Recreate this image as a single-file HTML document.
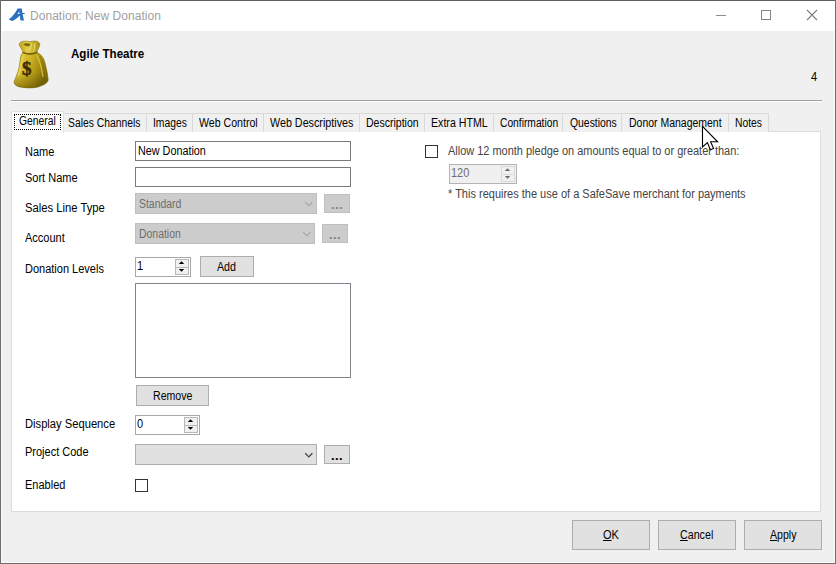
<!DOCTYPE html>
<html>
<head>
<meta charset="utf-8">
<title>Donation: New Donation</title>
<style>
*{box-sizing:border-box;margin:0;padding:0}
html,body{width:836px;height:564px;overflow:hidden;background:#f0f0f0}
body{font-family:"Liberation Sans",sans-serif;font-size:11px;color:#000;position:relative}
.abs{position:absolute}
#win{position:absolute;left:0;top:0;width:836px;height:564px;background:#f0f0f0}
.bd{position:absolute}
#titlebar{position:absolute;left:1px;top:1px;width:834px;height:30px;background:#fff}
#title{position:absolute;left:29px;top:8px;font-size:12px;line-height:15px;color:#a0a0a0;white-space:nowrap;letter-spacing:0.04px}
.t{position:absolute;white-space:nowrap;line-height:13px;font-size:12px;transform:scaleX(.9167);transform-origin:0 0}
.lbl{left:25px}
.inp{position:absolute;background:#fff;border:1px solid #7a7a7a;height:20px}
.inp .t{left:2px;top:3px}
.combo{position:absolute;background:#ccc;border:1px solid #bfbfbf;height:21px}
.combo .t{left:3px;top:4px;color:#6d6d6d;transform:scaleX(.87)}
.btn{position:absolute;background:#e1e1e1;border:1px solid #adadad}
.dis{background:#ccc;border-color:#bfbfbf;color:#838383}
.tab{position:absolute;top:113px;height:19px;border-top:1px solid #d9d9d9;border-right:1px solid #d9d9d9;background:#f0f0f0}
.tt{top:117px;transform:scaleX(.861)}
.num{position:absolute;background:#fff;border:1px solid #a8a8a8;height:20px}
.num .t{left:1px;top:2px}
.sb{position:absolute;width:14px;height:9px;background:#f0f0f0;border:1px solid #b8b8b8}
.dots{position:absolute;white-space:nowrap;font-weight:bold;font-size:13px;letter-spacing:0.45px;line-height:13px;color:#000}
.dis .dots{color:#838383}
.chk{position:absolute;width:13px;height:13px;border:1px solid #333;background:#fff}
u{text-decoration:underline}
</style>
</head>
<body>
<div id="win"></div>
<div class="bd" style="left:1px;top:31px;width:1px;height:532px;background:#fcfcfc"></div>
<div class="bd" style="left:834px;top:31px;width:1px;height:532px;background:#fcfcfc"></div>
<div class="bd" style="left:1px;top:562px;width:834px;height:1px;background:#fafafa"></div>
<div class="bd" style="left:0;top:0;width:836px;height:1px;background:#5e5e5e"></div>
<div class="bd" style="left:0;top:0;width:1px;height:564px;background:#6c6c6c"></div>
<div class="bd" style="left:835px;top:0;width:1px;height:564px;background:#6e6e6e"></div>
<div class="bd" style="left:0;top:563px;width:836px;height:1px;background:#6e6e6e"></div>
<div id="titlebar">
  <svg class="abs" style="left:-1px;top:-1px" width="40" height="30" viewBox="0 0 40 30">
    <path d="M17.7 8.6 L21.8 8.6 L22.4 13 L24.8 12.9 L24.6 14 L22.6 14.1 L24 20.4 L20.5 20.4 L19.7 15.6 C17.5 18 15 20 12.2 20.9 L8.7 19.6 C12 17.5 15 13.5 17.7 8.6 Z M19.2 11.6 L17.6 14 L19.6 14 Z" fill="#2b70bf" fill-rule="evenodd"/>
  </svg>
  <div id="title">Donation: New Donation</div>
  <!-- window controls -->
  <svg class="abs" style="left:710px;top:0px" width="120" height="30" viewBox="0 0 120 30">
    <path d="M5 14.5 H15" stroke="#8c8c8c" stroke-width="1" fill="none"/>
    <rect x="50.5" y="9.5" width="9" height="9" stroke="#858585" stroke-width="1" fill="none"/>
    <path d="M96 9 L106 19 M106 9 L96 19" stroke="#7d7d7d" stroke-width="1.1" fill="none"/>
  </svg>
</div>

<!-- header -->
<svg class="abs" id="bag" style="left:10px;top:36px" width="44" height="56" viewBox="0 0 44 56">
  <defs>
    <linearGradient id="gb" x1="0" y1="0" x2="1" y2="0.35">
      <stop offset="0" stop-color="#b89c14"/>
      <stop offset="0.25" stop-color="#dcc63a"/>
      <stop offset="0.5" stop-color="#cdb222"/>
      <stop offset="0.8" stop-color="#a38a10"/>
      <stop offset="1" stop-color="#7c6808"/>
    </linearGradient>
    <linearGradient id="gt" x1="0" y1="0" x2="1" y2="0">
      <stop offset="0" stop-color="#bfa418"/>
      <stop offset="0.4" stop-color="#e2cf48"/>
      <stop offset="1" stop-color="#a89012"/>
    </linearGradient>
    <linearGradient id="gs" x1="0" y1="0" x2="0" y2="1">
      <stop offset="0.55" stop-color="#6b5a06" stop-opacity="0"/>
      <stop offset="1" stop-color="#5e4e04" stop-opacity="0.55"/>
    </linearGradient>
  </defs>
  <path d="M12.8 16.5 C11 18.6 10.4 21 10.2 24 C9.6 32 7 39 4.2 45.2 C3.6 47.4 5 49.4 8 50.4 C13 52 22 52.6 28 51 C33 49.6 38.4 46.8 38.2 43.6 C37.8 39 36.6 33 35 27 C34 22.4 31.6 18.4 27 16.5 Z" fill="url(#gb)" stroke="#8a760c" stroke-width="0.6"/>
  <path d="M12.8 16.5 C11 18.6 10.4 21 10.2 24 C9.6 32 7 39 4.2 45.2 C3.6 47.4 5 49.4 8 50.4 C13 52 22 52.6 28 51 C33 49.6 38.4 46.8 38.2 43.6 C37.8 39 36.6 33 35 27 C34 22.4 31.6 18.4 27 16.5 Z" fill="url(#gs)"/>
  <path d="M26.6 19 C29.6 24 31.6 32 33 41" stroke="#e4d24e" stroke-width="1.3" fill="none" opacity="0.75"/>
  <path d="M29.6 20 C32.6 25 34.6 33 36 42" stroke="#8d790c" stroke-width="1.4" fill="none" opacity="0.7"/>
  <path d="M13 20 C11.6 27 10.4 33 8.4 40" stroke="#e8d85a" stroke-width="1.6" fill="none" opacity="0.7"/>
  <path d="M9.2 8.4 C9.6 6.2 11.6 5.2 14.6 5.2 C17.6 5 19.6 6 22 5.4 C25 4.6 28.6 5 29.8 7.8 C30 10.4 27.4 13.4 27 16.6 C23 18.4 16.8 18.4 12.8 16.6 C12.8 13.6 9.8 11.4 9.2 8.4 Z" fill="url(#gt)" stroke="#85710a" stroke-width="0.6"/>
  <path d="M13.4 8.2 C15.4 6.8 19 7 20.6 8.4 C19.4 10.8 15.4 10.8 13.4 8.2 Z" fill="#7a670a"/>
  <path d="M21.6 7.6 L19.8 15.2 M25 7.4 L23.6 15.4" stroke="#f0e274" stroke-width="1.1" fill="none" opacity="0.8"/>
  <path d="M13 16.4 C17 18.2 23 18.2 27 16.4" stroke="#6d5b06" stroke-width="1.3" fill="none"/>
  <text x="12" y="39.2" font-family="Liberation Serif, serif" font-weight="bold" font-size="19" fill="#3a2c04" stroke="#3a2c04" stroke-width="0.5">$</text>
</svg>
<div class="t" id="agile" style="left:71px;top:46px;font-weight:bold;font-size:13px;line-height:15px;transform:scaleX(.89)">Agile Theatre</div>
<div class="t" id="four" style="left:811px;top:71px">4</div>
<div class="abs" style="left:11px;top:100px;width:811px;height:1px;background:#a0a0a0"></div>
<div class="abs" style="left:11px;top:101px;width:811px;height:1px;background:#fff"></div>

<!-- tab panel -->
<div class="abs" id="panel" style="left:11px;top:131px;width:810px;height:381px;background:#fff;border:1px solid #dcdcdc"></div>

<!-- tabs -->
<div class="tab" style="left:63px;width:84px"></div>
<div class="tab" style="left:147px;width:46px"></div>
<div class="tab" style="left:193px;width:71px"></div>
<div class="tab" style="left:264px;width:96px"></div>
<div class="tab" style="left:360px;width:65px"></div>
<div class="tab" style="left:425px;width:69px"></div>
<div class="tab" style="left:494px;width:69px"></div>
<div class="tab" style="left:563px;width:59px"></div>
<div class="tab" style="left:622px;width:107px"></div>
<div class="tab" style="left:729px;width:40px"></div>
<div class="abs" id="tabsel" style="left:11px;top:111px;width:53px;height:22px;background:#fff;border:1px solid #e2e2e2;border-bottom:none"></div>
<div class="abs" style="left:14px;top:114px;width:47px;height:16px;border:1px dotted #000"></div>
<div class="t tt" id="t0" style="left:18.5px;top:115px">General</div>
<div class="t tt" id="t1" style="left:68px">Sales Channels</div>
<div class="t tt" id="t2" style="left:152.5px">Images</div>
<div class="t tt" id="t3" style="left:199px;transform:scaleX(.883)">Web Control</div>
<div class="t tt" id="t4" style="left:270px;transform:scaleX(.895)">Web Descriptives</div>
<div class="t tt" id="t5" style="left:366px;transform:scaleX(.876)">Description</div>
<div class="t tt" id="t6" style="left:431px;transform:scaleX(.885)">Extra HTML</div>
<div class="t tt" id="t7" style="left:499.5px;transform:scaleX(.855)">Confirmation</div>
<div class="t tt" id="t8" style="left:569.5px;transform:scaleX(.866)">Questions</div>
<div class="t tt" id="t9" style="left:628.5px;transform:scaleX(.873)">Donor Management</div>
<div class="t tt" id="t10" style="left:735px">Notes</div>

<!-- left column -->
<div class="t lbl" id="l1" style="top:146px">Name</div>
<div class="inp" style="left:135px;top:141px;width:216px"><div class="t" id="i1" style="transform:scaleX(.9)">New Donation</div></div>
<div class="t lbl" id="l2" style="top:172px">Sort Name</div>
<div class="inp" style="left:135px;top:167px;width:216px"></div>

<div class="t lbl" id="l3" style="top:202px;transform:scaleX(.937)">Sales Line Type</div>
<div class="combo" style="left:135px;top:193px;width:182px"><div class="t" id="c1">Standard</div>
  <svg class="abs" style="left:168px;top:7px" width="10" height="7" viewBox="0 0 10 7"><path d="M1.2 1.2 L4.8 4.8 L8.4 1.2" stroke="#a2a2a2" stroke-width="1.1" fill="none"/></svg>
</div>
<div class="btn dis" style="left:324px;top:194px;width:26px;height:19px"><div class="dots" id="d1" style="left:6px;top:3px">...</div></div>

<div class="t lbl" id="l4" style="top:232px">Account</div>
<div class="combo" style="left:135px;top:223px;width:180px"><div class="t" id="c2">Donation</div>
  <svg class="abs" style="left:166px;top:7px" width="10" height="7" viewBox="0 0 10 7"><path d="M1.2 1.2 L4.8 4.8 L8.4 1.2" stroke="#a2a2a2" stroke-width="1.1" fill="none"/></svg>
</div>
<div class="btn dis" style="left:322px;top:224px;width:26px;height:19px"><div class="dots" id="d2" style="left:6px;top:3px">...</div></div>

<div class="t lbl" id="l5" style="top:263px">Donation Levels</div>
<div class="num" style="left:135px;top:257px;width:56px"><div class="t" id="n1">1</div>
  <div class="sb" style="left:39px;top:1px"></div><div class="sb" style="left:39px;top:9px;height:8px"></div>
  <svg class="abs" style="left:39px;top:1px" width="15" height="17" viewBox="0 0 15 17"><path d="M3.8 5 L6.5 2.2 L9.2 5 Z M3.8 10 L6.5 12.8 L9.2 10 Z" fill="#000"/></svg>
</div>
<div class="btn" style="left:200px;top:256px;width:54px;height:21px"><div class="t" id="b1" style="left:16px;top:4px;transform:scaleX(.89)">Add</div></div>

<div class="inp" style="left:135px;top:283px;width:216px;height:95px;border-color:#82858c"></div>
<div class="btn" style="left:136px;top:385px;width:73px;height:21px"><div class="t" id="b2" style="left:16px;top:4px;transform:scaleX(.88)">Remove</div></div>

<div class="t lbl" id="l6" style="top:418px;transform:scaleX(.932)">Display Sequence</div>
<div class="num" style="left:135px;top:415px;width:65px"><div class="t" id="n2">0</div>
  <div class="sb" style="left:48px;top:1px"></div><div class="sb" style="left:48px;top:9px;height:8px"></div>
  <svg class="abs" style="left:48px;top:1px" width="15" height="17" viewBox="0 0 15 17"><path d="M3.8 5 L6.5 2.2 L9.2 5 Z M3.8 10 L6.5 12.8 L9.2 10 Z" fill="#000"/></svg>
</div>

<div class="t lbl" id="l7" style="top:446px">Project Code</div>
<div class="combo" style="left:135px;top:444px;width:182px;background:#e1e1e1;border-color:#adadad">
  <svg class="abs" style="left:168px;top:7px" width="10" height="7" viewBox="0 0 10 7"><path d="M1.2 1.2 L4.8 4.9 L8.4 1.2" stroke="#444" stroke-width="1.3" fill="none"/></svg>
</div>
<div class="btn" style="left:324px;top:445px;width:26px;height:19px"><div class="dots" id="d3" style="left:6px;top:3px">...</div></div>

<div class="t lbl" id="l8" style="top:479px">Enabled</div>
<div class="chk" style="left:135px;top:479px"></div>

<!-- right column -->
<div class="chk" style="left:425px;top:145px"></div>
<div class="t" id="r1" style="left:448px;top:145px;color:#444;transform:scaleX(.9136)">Allow 12 month pledge on amounts equal to or greater than:</div>
<div class="num" style="left:449px;top:164px;width:68px;background:#f0f0f0;border-color:#b4b4b4"><div class="t" id="n3" style="color:#6d6d6d">120</div>
  <div class="sb" style="left:51px;top:1px;border-color:#dadada"></div><div class="sb" style="left:51px;top:9px;height:8px;border-color:#dadada"></div>
  <svg class="abs" style="left:51px;top:1px" width="15" height="17" viewBox="0 0 15 17"><path d="M3.8 5 L6.5 2.2 L9.2 5 Z M3.8 10 L6.5 12.8 L9.2 10 Z" fill="#6a6a6a"/></svg>
</div>
<div class="t" id="r2" style="left:448px;top:188px;color:#444">* This requires the use of a SafeSave merchant for payments</div>

<!-- bottom buttons -->
<div class="btn" style="left:572px;top:520px;width:78px;height:30px"><div class="t" id="b3" style="left:30px;top:8px"><u>O</u>K</div></div>
<div class="btn" style="left:658px;top:520px;width:78px;height:30px"><div class="t" id="b4" style="left:21px;top:8px;transform:scaleX(.89)"><u>C</u>ancel</div></div>
<div class="btn" style="left:744px;top:520px;width:78px;height:30px"><div class="t" id="b5" style="left:25px;top:8px;transform:scaleX(.88)"><u>A</u>pply</div></div>

<!-- cursor -->
<svg class="abs" style="left:696px;top:120px" width="28" height="36" viewBox="696 120 28 36">
  <path d="M702.5 126.3 V147 L707.4 142.6 L710.4 149.8 L713.6 148.5 L710.6 141.8 H717.6 Z" fill="#fff" stroke="#000" stroke-width="1.1" stroke-linejoin="miter"/>
</svg>
</body>
</html>
